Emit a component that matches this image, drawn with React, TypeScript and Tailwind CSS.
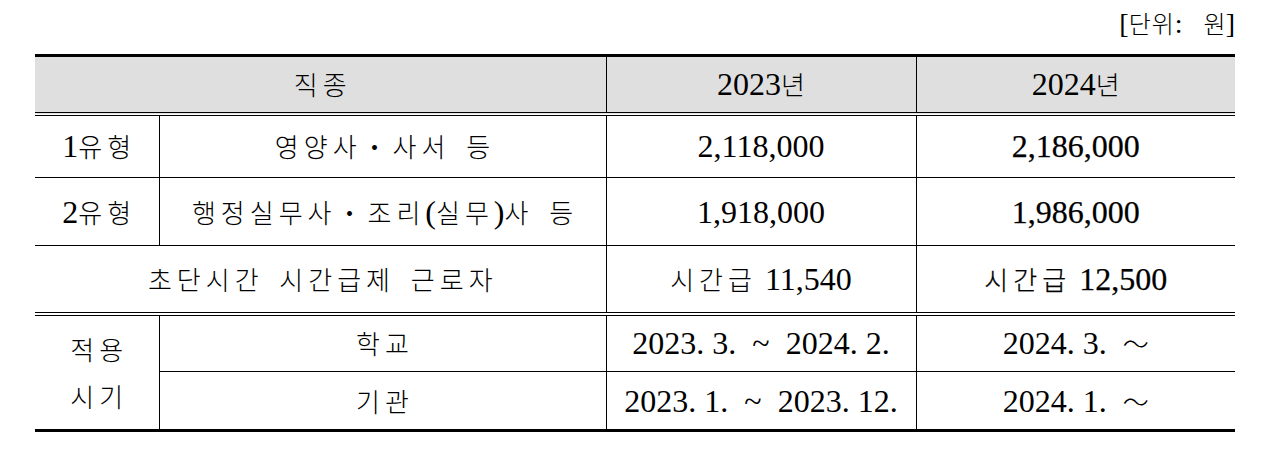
import React from "react";

// 한글 구간만 잘라서 본문 고딕 크기로, 숫자/기호는 명조 계열로
const KO = /([가-힣・～](?:[가-힣・～ ]*[가-힣・～])?)/;

function Txt({ t, bold = false }: { t: string; bold?: boolean }) {
  const parts = t.split(KO);
  const last = parts.length - 2;
  return (
    <span className={`whitespace-pre ${bold ? "[-webkit-text-stroke:0.25px_#000]" : ""}`}>
      {parts.map((p, i) =>
        i % 2 === 1 ? (
          <span
            key={i}
            className={`font-['Noto_Sans_CJK_KR',sans-serif] font-light text-[26px] tracking-[5px] [word-spacing:5px] ${
              i === last && parts[i + 1] === "" ? "mr-[-5px]" : ""
            }`}
          >
            {p}
          </span>
        ) : (
          <span key={i}>{p}</span>
        )
      )}
    </span>
  );
}

const cell = "border-black text-center align-middle p-0 leading-none";

export default function App() {
  return (
    <div className="w-[1280px] h-[449px] bg-white text-black font-['Liberation_Serif','Noto_Sans_CJK_KR',serif] text-[32px]">
      <div className="w-[1200px] ml-[35px]">
        <div className="h-[54px] pt-[8px] text-right text-[28px] leading-[30px]">
          <span className="whitespace-pre">
            [
            <span className="font-['Noto_Sans_CJK_KR',sans-serif] font-light text-[24px] tracking-[1px]">단위</span>
            :{"   "}
            <span className="font-['Noto_Sans_CJK_KR',sans-serif] font-light text-[24px]">원</span>]
          </span>
        </div>
        <table className="w-[1200px] table-fixed border-collapse border-t-[3px] border-b-[3px] border-black">
          <colgroup>
            <col className="w-[124px]" />
            <col className="w-[447px]" />
            <col className="w-[310px]" />
            <col className="w-[319px]" />
          </colgroup>
          <tbody>
            <tr className="h-[58px] bg-[#dfdfdf]">
              <td colSpan={2} className={`${cell} border-b-4 border-double border-r`}>
                <Txt t="직종" />
              </td>
              <td className={`${cell} border-b-4 border-double border-r`}>
                <Txt t="2023년" />
              </td>
              <td className={`${cell} border-b-4 border-double`}>
                <Txt t="2024년" />
              </td>
            </tr>
            <tr className="h-[64px]">
              <td className={`${cell} border-b border-r`}>
                <Txt t="1유형" />
              </td>
              <td className={`${cell} border-b border-r`}>
                <Txt t="영양사・사서 등" />
              </td>
              <td className={`${cell} border-b border-r`}>
                <Txt t="2,118,000" />
              </td>
              <td className={`${cell} border-b`}>
                <Txt t="2,186,000" bold />
              </td>
            </tr>
            <tr className="h-[68px]">
              <td className={`${cell} border-b border-r`}>
                <Txt t="2유형" />
              </td>
              <td className={`${cell} border-b border-r`}>
                <Txt t="행정실무사・조리(실무)사 등" />
              </td>
              <td className={`${cell} border-b border-r`}>
                <Txt t="1,918,000" />
              </td>
              <td className={`${cell} border-b`}>
                <Txt t="1,986,000" bold />
              </td>
            </tr>
            <tr className="h-[68px]">
              <td colSpan={2} className={`${cell} border-b-4 border-double border-r`}>
                <Txt t="초단시간 시간급제 근로자" />
              </td>
              <td className={`${cell} border-b-4 border-double border-r`}>
                <Txt t="시간급 11,540" />
              </td>
              <td className={`${cell} border-b-4 border-double`}>
                <Txt t="시간급 12,500" bold />
              </td>
            </tr>
            <tr className="h-[58px]">
              <td rowSpan={2} className={`${cell} border-r`}>
                <div className="h-[47px] leading-[47px]">
                  <Txt t="적용" />
                </div>
                <div className="h-[47px] leading-[47px]">
                  <Txt t="시기" />
                </div>
              </td>
              <td className={`${cell} border-b border-r`}>
                <Txt t="학교" />
              </td>
              <td className={`${cell} border-b border-r`}>
                <Txt t="2023. 3.  ~  2024. 2." />
              </td>
              <td className={`${cell} border-b`}>
                <Txt t="2024. 3.  ～" />
              </td>
            </tr>
            <tr className="h-[59px]">
              <td className={`${cell} border-r`}>
                <Txt t="기관" />
              </td>
              <td className={`${cell} border-r`}>
                <Txt t="2023. 1.  ~  2023. 12." />
              </td>
              <td className={cell}>
                <Txt t="2024. 1.  ～" />
              </td>
            </tr>
          </tbody>
        </table>
      </div>
    </div>
  );
}
